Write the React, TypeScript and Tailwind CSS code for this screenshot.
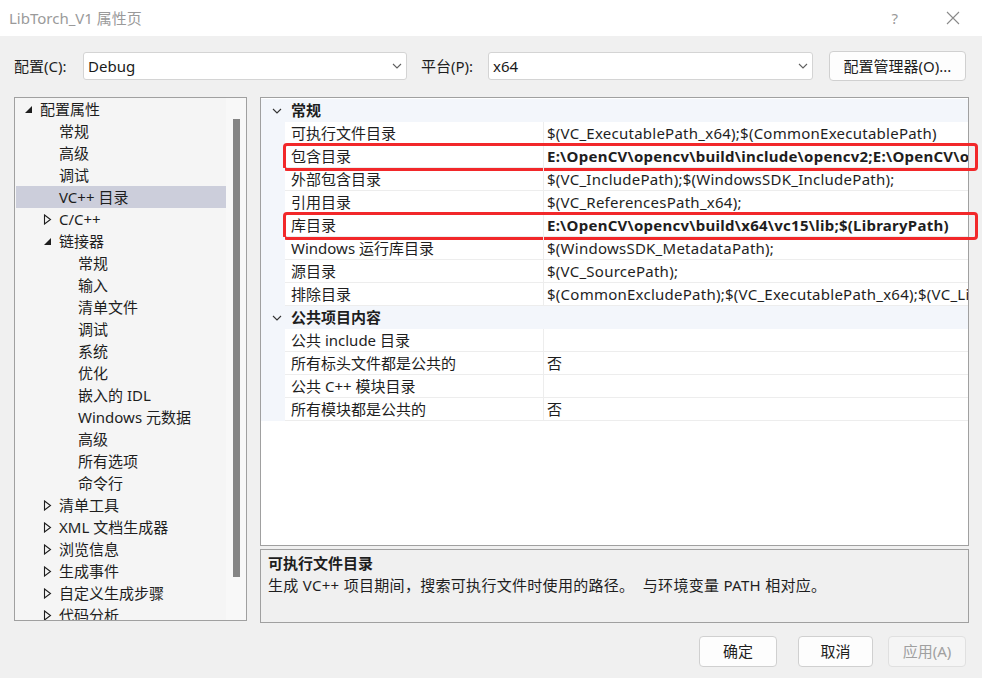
import React from "react";

const FONT = { fontFamily: '"Noto Sans", "Noto Sans CJK SC", sans-serif' };

type TreeItem = { label: string; level: number; arrow?: "open" | "closed"; selected?: boolean };

const tree: TreeItem[] = [
  { label: "配置属性", level: 0, arrow: "open" },
  { label: "常规", level: 1 },
  { label: "高级", level: 1 },
  { label: "调试", level: 1 },
  { label: "VC++ 目录", level: 1, selected: true },
  { label: "C/C++", level: 1, arrow: "closed" },
  { label: "链接器", level: 1, arrow: "open" },
  { label: "常规", level: 2 },
  { label: "输入", level: 2 },
  { label: "清单文件", level: 2 },
  { label: "调试", level: 2 },
  { label: "系统", level: 2 },
  { label: "优化", level: 2 },
  { label: "嵌入的 IDL", level: 2 },
  { label: "Windows 元数据", level: 2 },
  { label: "高级", level: 2 },
  { label: "所有选项", level: 2 },
  { label: "命令行", level: 2 },
  { label: "清单工具", level: 1, arrow: "closed" },
  { label: "XML 文档生成器", level: 1, arrow: "closed" },
  { label: "浏览信息", level: 1, arrow: "closed" },
  { label: "生成事件", level: 1, arrow: "closed" },
  { label: "自定义生成步骤", level: 1, arrow: "closed" },
  { label: "代码分析", level: 1, arrow: "closed" },
];

type Row =
  | { kind: "cat"; label: string }
  | { kind: "prop"; name: string; value: string; bold?: boolean; mark?: boolean };

const rows: Row[] = [
  { kind: "cat", label: "常规" },
  { kind: "prop", name: "可执行文件目录", value: "$(VC_ExecutablePath_x64);$(CommonExecutablePath)" },
  { kind: "prop", name: "包含目录", value: "E:\\OpenCV\\opencv\\build\\include\\opencv2;E:\\OpenCV\\opencv\\build\\include;$(IncludePath)", bold: true, mark: true },
  { kind: "prop", name: "外部包含目录", value: "$(VC_IncludePath);$(WindowsSDK_IncludePath);" },
  { kind: "prop", name: "引用目录", value: "$(VC_ReferencesPath_x64);" },
  { kind: "prop", name: "库目录", value: "E:\\OpenCV\\opencv\\build\\x64\\vc15\\lib;$(LibraryPath)", bold: true, mark: true },
  { kind: "prop", name: "Windows 运行库目录", value: "$(WindowsSDK_MetadataPath);" },
  { kind: "prop", name: "源目录", value: "$(VC_SourcePath);" },
  { kind: "prop", name: "排除目录", value: "$(CommonExcludePath);$(VC_ExecutablePath_x64);$(VC_LibraryPath_x64)" },
  { kind: "cat", label: "公共项目内容" },
  { kind: "prop", name: "公共 include 目录", value: "" },
  { kind: "prop", name: "所有标头文件都是公共的", value: "否" },
  { kind: "prop", name: "公共 C++ 模块目录", value: "" },
  { kind: "prop", name: "所有模块都是公共的", value: "否" },
];

function TreeArrow({ type }: { type: "open" | "closed" }) {
  if (type === "open") {
    return (
      <svg width="9" height="9" viewBox="0 0 9 9">
        <path d="M8 1 L8 8 L1 8 Z" fill="#1e1e1e" />
      </svg>
    );
  }
  return (
    <svg width="9" height="11" viewBox="0 0 9 11">
      <path d="M1.5 1 L7.5 5.5 L1.5 10 Z" fill="none" stroke="#1e1e1e" strokeWidth="1.1" />
    </svg>
  );
}

function Chevron({ color = "#555" }: { color?: string }) {
  return (
    <svg width="10" height="6" viewBox="0 0 10 6">
      <path d="M1 1 L5 5 L9 1" fill="none" stroke={color} strokeWidth="1.1" />
    </svg>
  );
}

function Combo({ value, width }: { value: string; width: string }) {
  return (
    <div className={`${width} h-[28px] bg-white border border-[#d4d4d4] rounded-[3px] flex items-center justify-between pl-[4px] pr-[4px]`}>
      <span className="text-[15px] text-[#1a1a1a]">{value}</span>
      <Chevron color="#606060" />
    </div>
  );
}

export default function App() {
  return (
    <div className="w-[982px] h-[678px] bg-[#f0f0f0] flex flex-col overflow-hidden text-[#1e1e1e]" style={FONT}>
      {/* title bar */}
      <div className="h-[36px] bg-white flex items-center justify-between pl-[9px] pr-[22px] shrink-0">
        <span className="text-[15px] text-[#9a9a9a]">LibTorch_V1 属性页</span>
        <div className="flex items-center gap-[48px]">
          <span className="text-[15px] text-[#9a9a9a]">?</span>
          <svg width="14" height="14" viewBox="0 0 14 14">
            <path d="M1 1 L13 13 M13 1 L1 13" stroke="#8a8a8a" strokeWidth="1.1" />
          </svg>
        </div>
      </div>

      {/* config row */}
      <div className="flex items-center h-[32px] mt-[14px] pl-[14px] shrink-0">
        <span className="text-[15px] w-[69px]">配置(C):</span>
        <Combo value="Debug" width="w-[324px]" />
        <span className="text-[15px] ml-[14px] w-[67px]">平台(P):</span>
        <Combo value="x64" width="w-[325px]" />
        <div className="ml-[16px] w-[137px] h-[30px] bg-[#fdfdfd] border border-[#d0d0d0] rounded-[4px] flex items-center justify-center text-[15px]">
          配置管理器(O)...
        </div>
      </div>

      {/* main */}
      <div className="flex mt-[15px] pl-[14px] shrink-0">
        {/* tree */}
        <div className="w-[233px] h-[524px] border border-[#a0a0a0] bg-[#f5f5f5] flex overflow-hidden">
          <div className="flex-1 pl-[1px]">
            {tree.map((t, i) => (
              <div
                key={i}
                className={`h-[22px] flex items-center text-[15px] ${t.selected ? "bg-[#cccedb]" : ""} ${
                  t.level === 0 ? "pl-[8px]" : t.level === 1 ? "pl-[27px]" : "pl-[46px]"
                }`}
              >
                <div className="w-[16px] shrink-0 flex items-center">
                  {t.arrow && <TreeArrow type={t.arrow} />}
                </div>
                <span className="whitespace-nowrap">{t.label}</span>
              </div>
            ))}
          </div>
          <div className="w-[20px] bg-[#f8f8f8] flex justify-center pt-[21px]">
            <div className="w-[7px] h-[458px] bg-[#858585] ml-[1px]" />
          </div>
        </div>

        {/* right side */}
        <div className="ml-[13px] w-[709px] flex flex-col">
          <div className="h-[449px] border border-[#a0a0a0] bg-white relative pt-[1px]">
            {rows.map((r, i) =>
              r.kind === "cat" ? (
                <div key={i} className="h-[23px] flex items-center bg-[#f3f6fb]">
                  <div className="w-[30px] flex justify-center pl-[2px]">
                    <Chevron color="#333" />
                  </div>
                  <span className="text-[15px] font-bold">{r.label}</span>
                </div>
              ) : (
                <div key={i} className="h-[23px] flex relative">
                  <div className="w-[24px] bg-[#f3f6fb] shrink-0" />
                  <div className="w-[259px] shrink-0 flex items-center pl-[6px] border-b border-[#ededed] border-r text-[15px] whitespace-nowrap">
                    {r.name}
                  </div>
                  <div
                    className={`flex-1 min-w-0 flex items-center pl-[3px] border-b border-[#ededed] text-[15px] tracking-[0.25px] whitespace-nowrap overflow-hidden ${
                      r.bold ? "font-bold" : ""
                    }`}
                  >
                    {r.value}
                  </div>
                  {r.mark && (
                    <div className="absolute left-[22px] right-[-10px] top-[-2px] bottom-[-3px] border-[3px] border-[#f2282a] rounded-[4px] pointer-events-none" />
                  )}
                </div>
              )
            )}
          </div>
          <div className="mt-[3px] h-[74px] border border-[#a0a0a0] bg-[#f0f0f0] pl-[7px] pt-[3px]">
            <div className="text-[15px] font-bold leading-[21px]">可执行文件目录</div>
            <div className="text-[15px] leading-[22px] tracking-[0.3px] whitespace-pre">生成 VC++ 项目期间，搜索可执行文件时使用的路径。  与环境变量 PATH 相对应。</div>
          </div>
        </div>
      </div>

      {/* buttons */}
      <div className="flex justify-end pr-[16px] mt-[13px]">
        <div className="w-[78px] h-[31px] bg-[#fdfdfd] border border-[#d0d0d0] rounded-[4px] flex items-center justify-center text-[15px]">
          确定
        </div>
        <div className="ml-[21px] w-[75px] h-[31px] bg-[#fdfdfd] border border-[#d0d0d0] rounded-[4px] flex items-center justify-center text-[15px]">
          取消
        </div>
        <div className="ml-[15px] w-[78px] h-[31px] bg-[#f5f5f5] border border-[#e0e0e0] rounded-[4px] flex items-center justify-center text-[15px] text-[#a0a0a0]">
          应用(A)
        </div>
      </div>
    </div>
  );
}
